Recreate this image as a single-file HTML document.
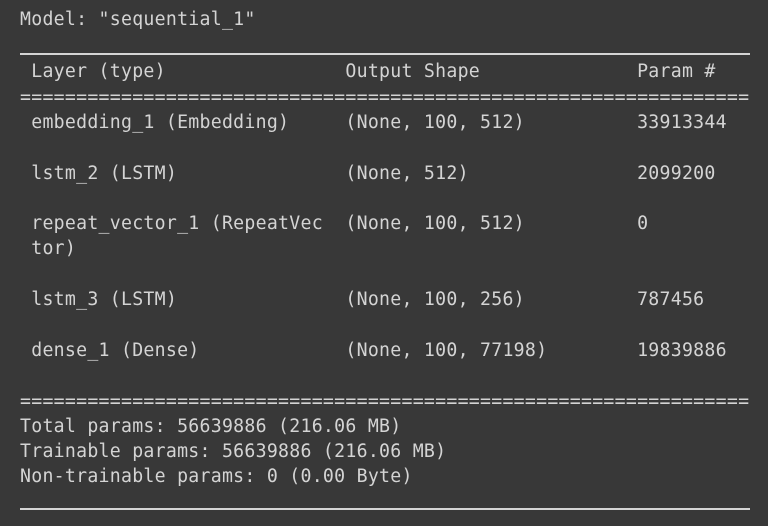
<html><head><style>
body{margin:0;width:768px;height:526px;background:#383838;overflow:hidden}
.l{position:absolute;left:20px;font-family:"DejaVu Sans Mono","Liberation Mono",monospace;font-size:18.2px;letter-spacing:0.27px;line-height:25px;color:#d4d4d4;white-space:pre}
.h{position:absolute;left:20px;width:730px;height:2px;background:#d4d4d4}
</style></head><body>
<div class="l" style="top:7px">Model: "sequential_1"</div>
<div class="h" style="top:53px"></div>
<div class="l" style="top:59px"> Layer (type)                Output Shape              Param #</div>
<div class="l" style="top:85px">=================================================================</div>
<div class="l" style="top:110px"> embedding_1 (Embedding)     (None, 100, 512)          33913344</div>
<div class="l" style="top:161px"> lstm_2 (LSTM)               (None, 512)               2099200</div>
<div class="l" style="top:211px"> repeat_vector_1 (RepeatVec  (None, 100, 512)          0</div>
<div class="l" style="top:236px"> tor)</div>
<div class="l" style="top:287px"> lstm_3 (LSTM)               (None, 100, 256)          787456</div>
<div class="l" style="top:338px"> dense_1 (Dense)             (None, 100, 77198)        19839886</div>
<div class="l" style="top:389px">=================================================================</div>
<div class="l" style="top:414px">Total params: 56639886 (216.06 MB)</div>
<div class="l" style="top:439px">Trainable params: 56639886 (216.06 MB)</div>
<div class="l" style="top:464px">Non-trainable params: 0 (0.00 Byte)</div>
<div class="h" style="top:508px"></div>
</body></html>
